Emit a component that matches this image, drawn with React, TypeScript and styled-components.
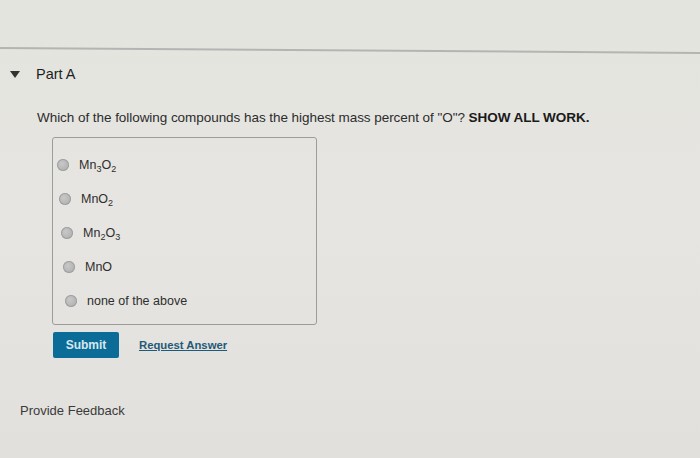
import React from "react";
import styled, { createGlobalStyle } from "styled-components";

const GlobalStyle = createGlobalStyle`
  html, body {
    margin: 0;
    padding: 0;
    background: #e3e2de;
    font-family: "Liberation Sans", Arial, sans-serif;
    color: #2e2e2e;
  }
`;

const options: { label: React.ReactNode; indent: number }[] = [
  { label: <>Mn<sub>3</sub>O<sub>2</sub></>, indent: 4 },
  { label: <>MnO<sub>2</sub></>, indent: 6 },
  { label: <>Mn<sub>2</sub>O<sub>3</sub></>, indent: 8 },
  { label: <>MnO</>, indent: 10 },
  { label: <>none of the above</>, indent: 12 },
];

const App = () => {
  return (
    <>
      <GlobalStyle />
      <Page>
        <Divider />
        <PartHeader>
          <Caret />
          <span>Part A</span>
        </PartHeader>
        <Question>
          Which of the following compounds has the highest mass percent of "O"? <strong>SHOW ALL WORK.</strong>
        </Question>
        <OptionsBox>
          {options.map((o, i) => (
            <Option key={i} $indent={o.indent}>
              <Radio />
              <span>{o.label}</span>
            </Option>
          ))}
        </OptionsBox>
        <Actions>
          <SubmitButton>Submit</SubmitButton>
          <RequestLink>Request Answer</RequestLink>
        </Actions>
        <Feedback>Provide Feedback</Feedback>
      </Page>
    </>
  );
};

export default App;

const Page = styled.div`
  width: 700px;
  height: 458px;
  padding-top: 47px;
  box-sizing: border-box;
  overflow: hidden;
  background: linear-gradient(180deg, #e4e4df 0%, #e6e5e1 50%, #e2e0dc 100%);
`;

const Divider = styled.div`
  height: 2px;
  background: #b4b4b2;
  transform: rotate(0.4deg);
  transform-origin: left;
`;

const PartHeader = styled.div`
  display: flex;
  align-items: center;
  margin-top: 17px;
  padding-left: 10px;
  font-size: 14.5px;
  color: #1e1e1e;
  height: 16px;

  span {
    margin-left: 16px;
  }
`;

const Caret = styled.i`
  width: 0;
  height: 0;
  border-left: 5px solid transparent;
  border-right: 5px solid transparent;
  border-top: 7px solid #333;
`;

const Question = styled.p`
  margin: 28px 0 0 37px;
  font-size: 13.5px;
  color: #2c2c2c;
  letter-spacing: -0.05px;

  strong {
    color: #1a1a1a;
  }
`;

const OptionsBox = styled.div`
  margin: 12px 0 0 52px;
  width: 265px;
  height: 188px;
  box-sizing: border-box;
  border: 1px solid #9c9c9a;
  border-radius: 3px;
  padding-top: 18px;
  display: flex;
  flex-direction: column;
  gap: 17px;
`;

const Option = styled.div<{ $indent: number }>`
  display: flex;
  align-items: center;
  padding-left: ${(p) => p.$indent}px;
  font-size: 12.5px;
  color: #2e2e2e;
  height: 17px;

  span {
    margin-left: 10px;
  }

  sub {
    font-size: 9px;
    vertical-align: -3px;
    line-height: 0;
  }
`;

const Radio = styled.i`
  width: 12px;
  height: 12px;
  border-radius: 50%;
  background: radial-gradient(circle at 40% 40%, #c8c8c8, #a9a9a9);
  box-shadow: inset 0 0 0 1px #a0a0a0;
`;

const Actions = styled.div`
  display: flex;
  align-items: center;
  margin: 7px 0 0 53px;
  gap: 20px;
`;

const SubmitButton = styled.button`
  width: 66px;
  height: 26px;
  border: none;
  border-radius: 2px;
  background: #0b6c98;
  color: #d8e8ef;
  font-family: "Liberation Sans", Arial, sans-serif;
  font-size: 12px;
  font-weight: bold;
  padding: 0;
`;

const RequestLink = styled.a`
  font-size: 11.3px;
  font-weight: bold;
  color: #1f5a78;
  text-decoration: underline;
`;

const Feedback = styled.div`
  margin: 45px 0 0 20px;
  font-size: 13px;
  color: #3a3a3a;
`;
